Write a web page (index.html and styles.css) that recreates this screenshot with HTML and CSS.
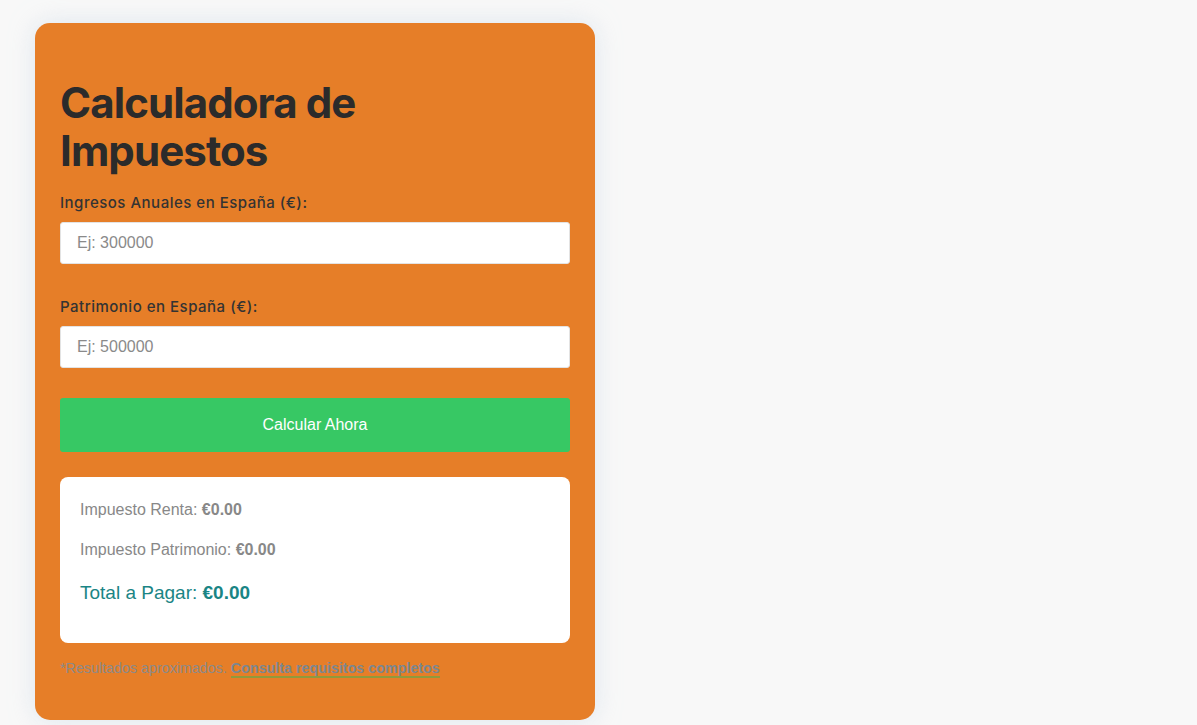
FILE: index.html
```html
<!DOCTYPE html>
<html lang="es">
<head>
<meta charset="utf-8">
<title>Calculadora de Impuestos</title>
<link rel="stylesheet" href="styles.css">
</head>
<body>
<div class="card">
  <h1 class="title">Calculadora de Impuestos</h1>
  <div class="group">
    <label class="label" for="ingresos">Ingresos Anuales en España (€):</label>
    <input class="input" id="ingresos" type="text" placeholder="Ej: 300000">
  </div>
  <div class="group">
    <label class="label" for="patrimonio">Patrimonio en España (€):</label>
    <input class="input" id="patrimonio" type="text" placeholder="Ej: 500000">
  </div>
  <button class="btn" type="button">Calcular Ahora</button>
  <div class="results">
    <p class="row">Impuesto Renta: <strong>€0.00</strong></p>
    <p class="row">Impuesto Patrimonio: <strong>€0.00</strong></p>
    <p class="row total">Total a Pagar: <strong>€0.00</strong></p>
  </div>
  <p class="note">*Resultados aproximados. <a class="link" href="#">Consulta requisitos completos</a></p>
</div>
</body>
</html>
```
FILE: styles.css
```css
html, body {
  margin: 0;
  padding: 0;
}
body {
  background: #f8f8f8;
  padding: 23px 35px;
  font-family: "Liberation Sans", Arial, sans-serif;
}
.card {
  box-sizing: border-box;
  width: 560px;
  background: #e67e28;
  border-radius: 15px;
  padding: 56px 25px 25px;
  box-shadow: 0 0 24px rgba(205, 218, 232, 0.6);
}
.title {
  margin: 0 0 17px;
  font-family: Inter, "Noto Sans", sans-serif;
  font-weight: 700;
  font-size: 42px;
  line-height: 48px;
  letter-spacing: -0.9px;
  color: #2b2b2b;
}
.group {
  margin-bottom: 32px;
}
.label {
  display: block;
  font-family: Inter, "Noto Sans", sans-serif;
  font-weight: 500;
  font-size: 15px;
  line-height: 22px;
  letter-spacing: 0.5px;
  color: #333;
  margin-bottom: 8px;
}
.input {
  display: block;
  box-sizing: border-box;
  width: 100%;
  height: 42px;
  padding: 0 16px;
  border: 1px solid #e3e3e3;
  border-radius: 3px;
  background: #fff;
  font-family: "Liberation Sans", Arial, sans-serif;
  font-size: 16px;
  color: #333;
}
.input::placeholder {
  color: #8a8a8a;
}
.btn {
  display: block;
  width: 100%;
  height: 54px;
  margin-top: -2px;
  border: none;
  border-radius: 3px;
  background: #37c864;
  color: #fff;
  font-family: "Liberation Sans", Arial, sans-serif;
  font-size: 16px;
}
.results {
  margin-top: 25px;
  background: #fff;
  border-radius: 8px;
  padding: 21px 20px 35px;
}
.row {
  margin: 0 0 16px;
  font-size: 16px;
  line-height: 24px;
  color: #888;
}
.row strong {
  font-weight: 700;
}
.total {
  margin: 0;
  font-size: 19px;
  line-height: 30px;
  color: #1a8585;
}
.note {
  margin: 15px 0 16px;
  font-size: 14.3px;
  line-height: 21px;
  color: #8c8a88;
}
.link {
  color: #7b8791;
  font-weight: 700;
  text-decoration: none;
  border-bottom: 2px solid #8f9a3e;
}
```
